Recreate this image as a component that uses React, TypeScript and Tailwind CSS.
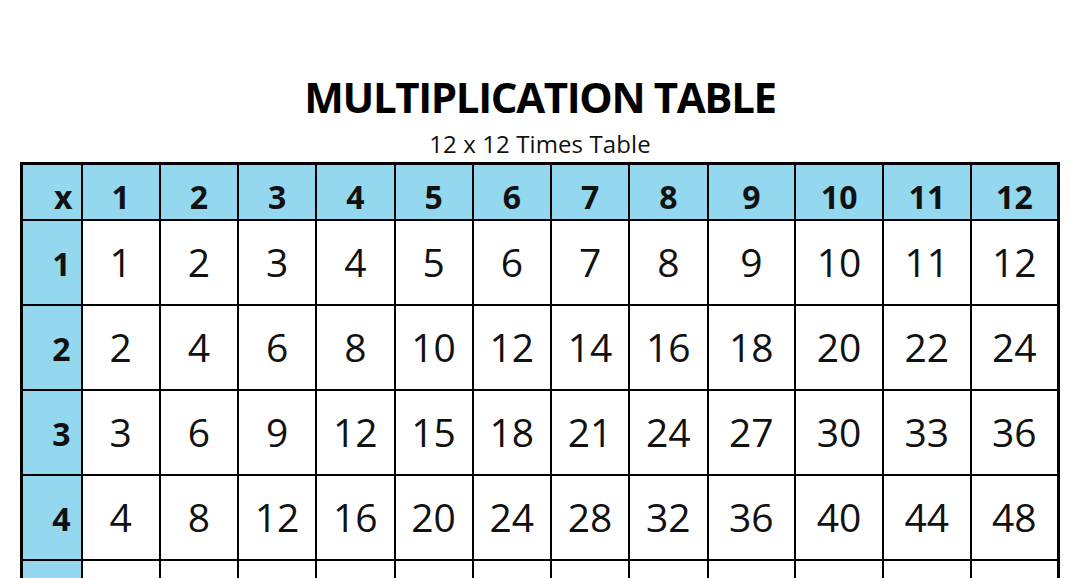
import React from "react";

const cols = Array.from({ length: 12 }, (_, i) => i + 1);

export default function App() {
  return (
    <div
      className="min-h-screen bg-white text-[#111]"
      style={{ fontFamily: '"Open Sans", "Liberation Sans", sans-serif' }}
    >
      <div className="pt-[76px] flex flex-col items-center">
        <h1 className="text-[42px] leading-[42px] font-bold tracking-[-1.35px] text-black">
          MULTIPLICATION TABLE
        </h1>
        <p className="mt-[14px] text-[24px] leading-[24px] tracking-[0.1px]">12 x 12 Times Table</p>
      </div>

      <div className="pl-[20px] mt-[6px]">
        <table className="table-fixed border-collapse w-[1039px] border-[3px] border-black">
          <colgroup>
            <col className="w-[60px]" />
            {cols.map((c) => (
              <col key={c} className={c <= 8 ? "w-[78.25px]" : "w-[87.75px]"} />
            ))}
          </colgroup>
          <thead>
            <tr className="h-[56px] bg-[#93d8ef]">
              <th className="border-2 border-black align-bottom text-right pr-[8px] pb-[6px] text-[32px] leading-[32px] font-bold">
                x
              </th>
              {cols.map((c) => (
                <th
                  key={c}
                  className="border-2 border-black align-bottom text-center pb-[6px] text-[32px] leading-[32px] font-bold"
                >
                  {c}
                </th>
              ))}
            </tr>
          </thead>
          <tbody>
            {cols.map((r) => (
              <tr key={r} className="h-[85px]">
                <td className="border-2 border-black bg-[#93d8ef] text-right pr-[10px] pt-[4px] align-middle text-[32px] leading-[32px] font-bold">
                  {r}
                </td>
                {cols.map((c) => (
                  <td
                    key={c}
                    className="border-2 border-black text-center align-middle pb-[2px] text-[39px] leading-[39px]"
                  >
                    {r * c}
                  </td>
                ))}
              </tr>
            ))}
          </tbody>
        </table>
      </div>
    </div>
  );
}
